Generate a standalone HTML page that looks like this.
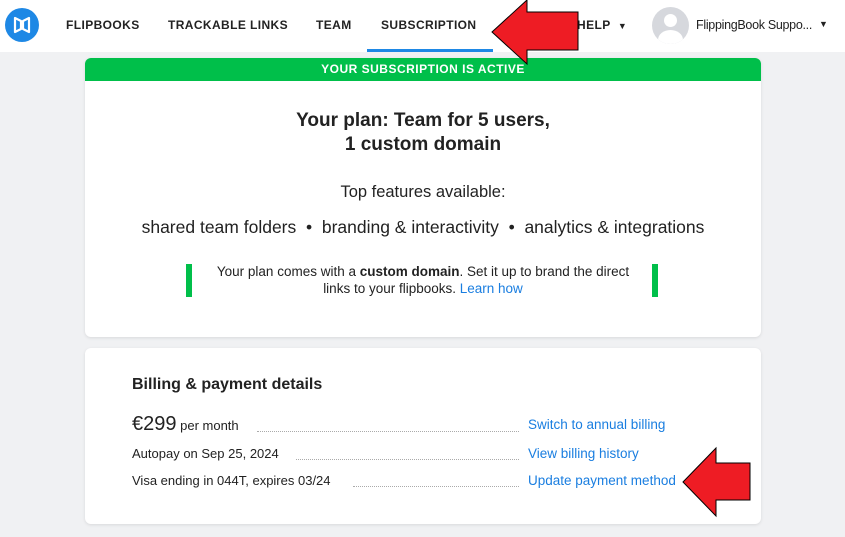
<!DOCTYPE html><html><head><style>
body{margin:0;width:845px;height:537px;background:#f0f1f3;font-family:"Liberation Sans",sans-serif;position:relative;overflow:hidden;color:#222}
.hdr{position:absolute;left:0;top:0;width:845px;height:52px;background:#fff}
.nav{position:absolute;top:18px;font-size:12px;font-weight:bold;letter-spacing:.4px;color:#222}
.card{position:absolute;left:85px;width:676px;background:#fff;border-radius:6px;box-shadow:0 1px 3px rgba(0,0,0,.1)}
.c{position:absolute;left:0;width:676px;text-align:center}
a{color:#1a7ee0;text-decoration:none}
.row{position:absolute;left:47px;font-size:13px}
.dots{position:absolute;border-bottom:1.5px dotted #aaa;height:0}
.lk{position:absolute;left:443px;font-size:13.5px;color:#1a7ee0}
</style></head><body>
<div class="hdr">
<div style="position:absolute;left:5px;top:8px;width:34px;height:34px;border-radius:50%;background:#1e88e5"></div>
<svg style="position:absolute;left:12px;top:15px" width="20" height="20" viewBox="0 0 20 20"><path d="M3 3 L9 6 L9 14 L3 17 Z M17 3 L11 6 L11 14 L17 17 Z" fill="none" stroke="#fff" stroke-width="2.2" stroke-linejoin="round"/></svg>
<div class="nav" style="left:66px">FLIPBOOKS</div>
<div class="nav" style="left:168px">TRACKABLE LINKS</div>
<div class="nav" style="left:316px">TEAM</div>
<div class="nav" style="left:381px">SUBSCRIPTION</div>
<div style="position:absolute;left:367px;top:49px;width:126px;height:3px;background:#1e88e5"></div>
<div class="nav" style="left:577px">HELP &nbsp;<span style="font-size:9px">▼</span></div>
<div style="position:absolute;left:652px;top:7px;width:37px;height:37px;border-radius:50%;background:#d6d8dd;overflow:hidden"><div style="position:absolute;left:12px;top:7px;width:13px;height:13px;border-radius:50%;background:#fff"></div><div style="position:absolute;left:6px;top:23px;width:25px;height:20px;border-radius:50%;background:#fff"></div></div>
<div style="position:absolute;left:696px;top:18px;font-size:12.5px;letter-spacing:-.3px">FlippingBook Suppo...</div>
<div style="position:absolute;left:819px;top:19px;font-size:9px">▼</div>
</div>
<div class="card" style="top:58px;height:279px">
<div style="height:23px;background:#00bf4a;border-radius:6px 6px 0 0;color:#fff;font-size:12px;font-weight:bold;text-align:center;line-height:23px;letter-spacing:.5px">YOUR SUBSCRIPTION IS ACTIVE</div>
<div class="c" style="top:51px;font-size:19px;font-weight:bold;line-height:24px">Your plan: Team for 5 users,<br>1 custom domain</div>
<div class="c" style="top:125px;font-size:16.5px">Top features available:</div>
<div class="c" style="top:159px;font-size:17.5px">shared team folders &nbsp;•&nbsp; branding &amp; interactivity &nbsp;•&nbsp; analytics &amp; integrations</div>
<div style="position:absolute;left:101px;top:206px;width:6px;height:33px;background:#00bf4a"></div>
<div style="position:absolute;left:567px;top:206px;width:6px;height:33px;background:#00bf4a"></div>
<div class="c" style="top:205px;font-size:13.5px;line-height:17px">Your plan comes with a <b>custom domain</b>. Set it up to brand the direct<br>links to your flipbooks. <a>Learn how</a></div>
</div>
<div class="card" style="top:348px;height:176px">
<div style="position:absolute;left:47px;top:28px;font-size:16px;font-weight:bold">Billing &amp; payment details</div>
<div class="row" style="top:65px"><span style="font-size:20px">€299</span> per month</div>
<div class="dots" style="left:172px;width:262px;top:83px"></div>
<div class="lk" style="top:69px">Switch to annual billing</div>
<div class="row" style="top:98px">Autopay on Sep 25, 2024</div>
<div class="dots" style="left:211px;width:223px;top:111px"></div>
<div class="lk" style="top:98px">View billing history</div>
<div class="row" style="top:125px">Visa ending in 044T, expires 03/24</div>
<div class="dots" style="left:268px;width:166px;top:138px"></div>
<div class="lk" style="top:125px">Update payment method</div>
</div>
<svg style="position:absolute;left:0;top:0" width="845" height="537"><path d="M492 32 L527 0 L527 12 L578 12 L578 50 L527 50 L527 64 Z" fill="#ee1c24" stroke="#000" stroke-width="1"/><path d="M683 482 L716 448 L716 463 L750 463 L750 500 L716 500 L716 516 Z" fill="#ee1c24" stroke="#000" stroke-width="1"/></svg>
</body></html>
